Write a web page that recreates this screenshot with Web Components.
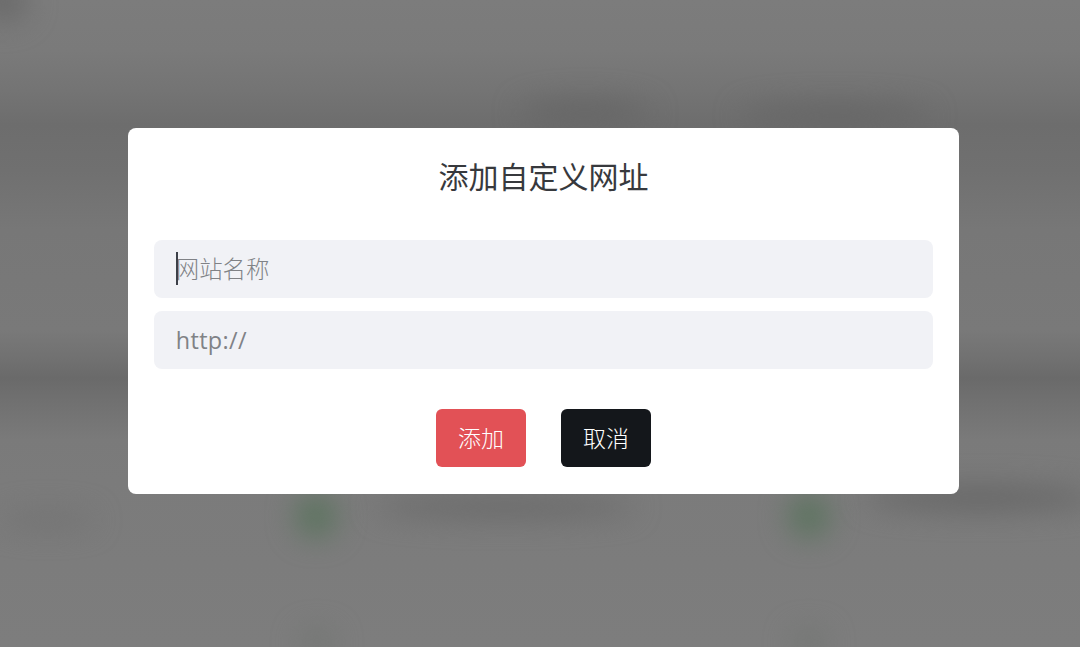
<!DOCTYPE html>
<html lang="zh">
<head>
<meta charset="utf-8">
<title>添加自定义网址</title>
<style>
  html, body { margin: 0; height: 100%; }
  body { font-family: "Noto Sans CJK SC", "Open Sans", sans-serif; }
</style>
</head>
<body>
<blurred-page>
  <site-dialog heading="添加自定义网址">
    <text-field placeholder="网站名称" focused style="--weight:300"></text-field>
    <text-field placeholder="http://" style="--track:.35px"></text-field>
    <dialog-button slot="actions" tone="red">添加</dialog-button>
    <dialog-button slot="actions" tone="dark">取消</dialog-button>
  </site-dialog>
</blurred-page>

<script>
class BlurredPage extends HTMLElement {
  connectedCallback() {
    this.attachShadow({mode:'open'});
    this.shadowRoot.innerHTML = `
    <style>
      :host {
        display: block;
        position: relative;
        width: 1080px;
        height: 647px;
        overflow: hidden;
        background: linear-gradient(180deg,
          #7c7c7c 0, #7a7a7a 50px, #747474 90px, #6d6d6d 125px, #707070 170px,
          #777 230px, #797979 330px, #717171 358px, #6a6a6a 378px, #707070 400px,
          #7a7a7a 440px, #7b7b7b 480px, #7d7d7d 647px);
      }
      .blob { position: absolute; border-radius: 50%; filter: blur(14px); }
      .content {
        position: relative;
        display: flex;
        justify-content: center;
        padding: 128px 0 0 7px;
      }
    </style>
    <div class="blob" style="left:-22px;top:-18px;width:50px;height:40px;background:#6a6a6a"></div>
    <div class="blob" style="left:520px;top:100px;width:130px;height:26px;background:#666"></div>
    <div class="blob" style="left:740px;top:104px;width:190px;height:24px;background:#666"></div>
    <div class="blob" style="left:295px;top:494px;width:42px;height:44px;background:#5d7460"></div>
    <div class="blob" style="left:788px;top:494px;width:42px;height:44px;background:#5d7460"></div>
    <div class="blob" style="left:375px;top:496px;width:260px;height:22px;background:#6a6a6a"></div>
    <div class="blob" style="left:865px;top:486px;width:230px;height:24px;background:#666"></div>
    <div class="blob" style="left:0;top:512px;width:95px;height:16px;background:#727272"></div>
    <div class="blob" style="left:300px;top:630px;width:34px;height:24px;background:#727572"></div>
    <div class="blob" style="left:792px;top:630px;width:34px;height:24px;background:#727572"></div>
    <div class="content"><slot></slot></div>
    `;
  }
}

class SiteDialog extends HTMLElement {
  connectedCallback() {
    this.attachShadow({mode:'open'});
    this.shadowRoot.innerHTML = `
    <style>
      :host {
        display: flex;
        flex-direction: column;
        box-sizing: border-box;
        width: 831.5px;
        height: 366px;
        padding: 0 26px;
        background: #fff;
        border-radius: 8px;
      }
      h2 {
        margin: 0;
        padding-top: 27px;
        height: 111.5px;
        box-sizing: border-box;
        font: 400 30px/40px "Noto Sans CJK SC", sans-serif;
        color: #37393d;
        text-align: center;
      }
      .fields { display: flex; flex-direction: column; gap: 13.5px; }
      .actions { display: flex; justify-content: center; gap: 35px; margin-top: 40px; }
    </style>
    <h2>${this.getAttribute('heading')}</h2>
    <div class="fields"><slot></slot></div>
    <div class="actions"><slot name="actions"></slot></div>
    `;
  }
}

class TextField extends HTMLElement {
  connectedCallback() {
    this.attachShadow({mode:'open'});
    const focused = this.hasAttribute('focused');
    this.shadowRoot.innerHTML = `
    <style>
      :host {
        display: flex;
        align-items: center;
        position: relative;
        box-sizing: border-box;
        height: 58px;
        padding-left: 22px;
        background: #f1f2f6;
        border-radius: 8px;
        font: var(--weight, 400) 23.4px/34px "Open Sans", "Noto Sans CJK SC", sans-serif;
        letter-spacing: var(--track, 0);
        color: #808286;
      }
      .caret {
        position: absolute;
        left: 22px;
        top: 12px;
        width: 2px;
        height: 33px;
        background: #3c4048;
      }
    </style>
    ${focused ? '<i class="caret"></i>' : ''}
    <span>${this.getAttribute('placeholder')}</span>
    `;
  }
}

class DialogButton extends HTMLElement {
  connectedCallback() {
    this.attachShadow({mode:'open'});
    const bg = this.getAttribute('tone') === 'red' ? '#e25156' : '#14171b';
    this.shadowRoot.innerHTML = `
    <style>
      :host {
        display: flex;
        align-items: center;
        justify-content: center;
        box-sizing: border-box;
        width: 90px;
        height: 58px;
        padding-bottom: 3px;
        border-radius: 6px;
        background: ${bg};
        color: #fff;
        font: 300 23px/30px "Noto Sans CJK SC", sans-serif;
      }
    </style>
    <slot></slot>
    `;
  }
}

customElements.define('blurred-page', BlurredPage);
customElements.define('site-dialog', SiteDialog);
customElements.define('text-field', TextField);
customElements.define('dialog-button', DialogButton);
</script>
</body>
</html>
